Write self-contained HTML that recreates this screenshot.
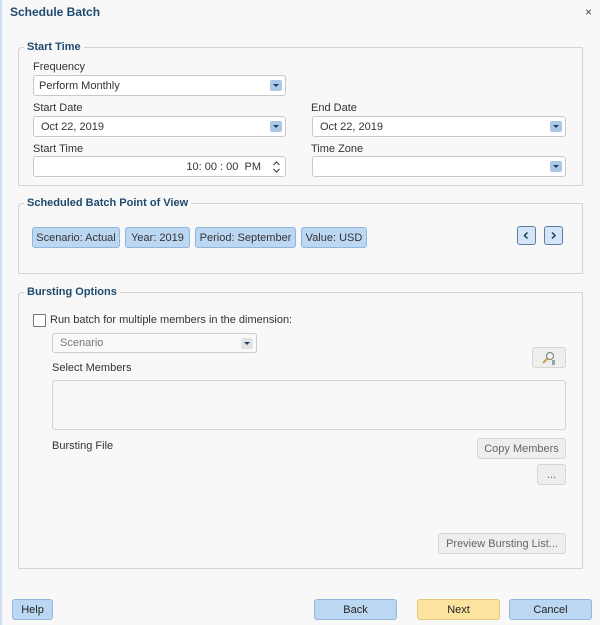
<!DOCTYPE html>
<html><head><meta charset="utf-8"><style>
*{box-sizing:border-box;margin:0;padding:0}
body{width:600px;height:625px;background:#f8f8f8;font-family:"Liberation Sans",sans-serif;font-size:11px;color:#333;position:relative;overflow:hidden}
.a{position:absolute}
.fs{position:absolute;border:1px solid #d4d4d4;border-radius:4px 0 0 0}
.lg{position:absolute;background:#f8f8f8;color:#1e4a6e;font-weight:bold;font-size:11px;padding:0 3px}
.lbl{position:absolute;font-size:11px;color:#333}
.inp{position:absolute;background:#fff;border:1px solid #c8c8c8;border-radius:3px;height:21px;line-height:21px;padding-left:7px;font-size:11px;color:#333}
.dd{position:absolute;right:3px;top:4px;width:12px;height:11px;background:#a9c8e8;border-radius:2px}
.dd:after{content:"";position:absolute;left:3px;top:4px;border-left:3px solid transparent;border-right:3px solid transparent;border-top:3px solid #1e3f60}
.chip{position:absolute;top:227px;height:21px;background:#bcd7f2;border:1px solid #8fb6dd;border-radius:3px;line-height:20px;text-align:center;font-size:11px;color:#333}
.nav{position:absolute;top:226px;width:19px;height:19px;border:1px solid #5e7e9e;border-radius:3px;background:#d3e5f7}
.gb{position:absolute;background:#eee;border:1px solid #d6d6d6;border-radius:3px;height:21px;line-height:20px;text-align:center;color:#666;font-size:11px}
.bb{position:absolute;top:599px;height:21px;background:#bcd7f2;border:1px solid #93b7da;border-radius:3px;line-height:20px;text-align:center;color:#222;font-size:11px}
</style></head><body>
<div class="a" style="left:0;top:0;width:2px;height:625px;background:#cfdff0"></div>
<div class="a" style="left:10px;top:5px;font-weight:bold;font-size:12px;color:#1e4a6e">Schedule Batch</div>
<div class="a" style="left:585px;top:5px;font-size:12px;color:#444">×</div>

<div class="fs" style="left:18px;top:47px;width:565px;height:139px"></div>
<div class="lg" style="left:24px;top:41px">Start Time</div>
<div class="lbl" style="left:33px;top:61px">Frequency</div>
<div class="inp" style="left:33px;top:75px;width:253px;padding-left:5px">Perform Monthly<div class="dd"></div></div>
<div class="lbl" style="left:33px;top:102px">Start Date</div>
<div class="inp" style="left:33px;top:116px;width:253px">Oct 22, 2019<div class="dd"></div></div>
<div class="lbl" style="left:311px;top:102px">End Date</div>
<div class="inp" style="left:312px;top:116px;width:254px">Oct 22, 2019<div class="dd"></div></div>
<div class="lbl" style="left:33px;top:143px">Start Time</div>
<div class="inp" style="left:33px;top:156px;width:253px;text-align:right;padding-right:24px">10:&nbsp;00&nbsp;:&nbsp;00&nbsp;&nbsp;PM
<svg class="a" style="right:4px;top:3px" width="9" height="14" viewBox="0 0 9 14"><path d="M1.5 5L4.5 2L7.5 5M1.5 9L4.5 12L7.5 9" fill="none" stroke="#444" stroke-width="1.2"/></svg></div>
<div class="lbl" style="left:311px;top:143px">Time Zone</div>
<div class="inp" style="left:312px;top:156px;width:254px"><div class="dd"></div></div>

<div class="fs" style="left:18px;top:203px;width:565px;height:71px"></div>
<div class="lg" style="left:24px;top:197px">Scheduled Batch Point of View</div>
<div class="chip" style="left:32px;width:88px">Scenario: Actual</div>
<div class="chip" style="left:125px;width:65px">Year: 2019</div>
<div class="chip" style="left:195px;width:101px">Period: September</div>
<div class="chip" style="left:301px;width:66px">Value: USD</div>
<div class="nav" style="left:517px"><svg width="17" height="17"><path d="M9.5 5.5L6.5 8.5L9.5 11.5" fill="none" stroke="#1e3f60" stroke-width="1.5"/></svg></div>
<div class="nav" style="left:544px"><svg width="17" height="17"><path d="M7 5.5L10 8.5L7 11.5" fill="none" stroke="#1e3f60" stroke-width="1.5"/></svg></div>

<div class="fs" style="left:18px;top:292px;width:565px;height:277px"></div>
<div class="lg" style="left:24px;top:286px">Bursting Options</div>
<div class="a" style="left:33px;top:314px;width:13px;height:13px;border:1px solid #777;background:#fff;border-radius:1px"></div>
<div class="lbl" style="left:50px;top:314px">Run batch for multiple members in the dimension:</div>
<div class="inp" style="left:52px;top:333px;width:205px;height:20px;line-height:19px;color:#777;border-color:#ccc;background:#f9f9f9">Scenario<div class="dd" style="background:#e2e2e2;top:4px"></div></div>
<div class="gb" style="left:532px;top:347px;width:34px">
<svg width="20" height="18" viewBox="0 0 20 18" style="margin-top:1px"><circle cx="11" cy="7" r="3.5" fill="#f4f4f4" stroke="#8a8a8a" stroke-width="1.2"/><path d="M8.5 9.5L4 14" stroke="#c9a24a" stroke-width="2"/><path d="M13 11h3v5h-3z" fill="#8aa"/></svg></div>
<div class="lbl" style="left:52px;top:362px">Select Members</div>
<div class="a" style="left:52px;top:380px;width:514px;height:50px;border:1px solid #d4d4d4;border-radius:3px;background:#f8f8f8"></div>
<div class="lbl" style="left:52px;top:440px">Bursting File</div>
<div class="gb" style="left:477px;top:438px;width:89px">Copy Members</div>
<div class="gb" style="left:537px;top:464px;width:29px">...</div>
<div class="gb" style="left:438px;top:533px;width:128px">Preview Bursting List...</div>

<div class="bb" style="left:12px;width:41px">Help</div>
<div class="bb" style="left:314px;width:83px">Back</div>
<div class="bb" style="left:417px;width:83px;background:#fde3a0;border-color:#e8c878">Next</div>
<div class="bb" style="left:509px;width:83px">Cancel</div>
</body></html>
